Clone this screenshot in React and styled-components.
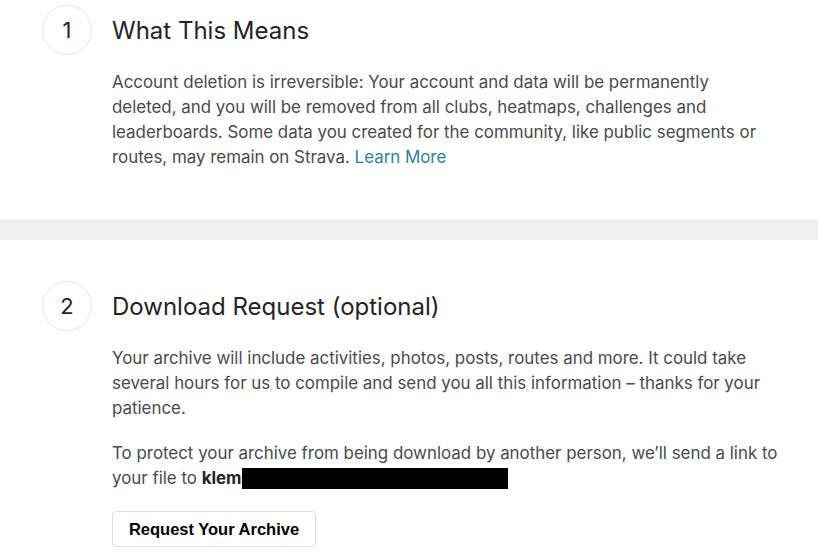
import styled, { createGlobalStyle } from "styled-components";

const Global = createGlobalStyle`
    body {
        margin: 0;
        background: #fff;
        font-family: Inter, "Noto Sans", sans-serif;
    }
`
const Page = styled.div`
    width: 818px;
    display: flex;
    flex-direction: column;
`
const Section = styled.section`
    padding: ${p => p.$top}px 30px ${p => p.$bottom}px 42px;
`
const Header = styled.div`
    display: flex;
    align-items: center;
    gap: 20px;
`
const Step = styled.div`
    width: 48px;
    height: 48px;
    border: 1px solid #e6e6e8;
    border-radius: 50%;
    display: flex;
    align-items: center;
    justify-content: center;
    font-size: 22px;
    color: #242428;
    flex-shrink: 0;
`
const Title = styled.h2`
    margin: 0;
    font-size: 24px;
    font-weight: 400;
    color: #242428;
`
const Body = styled.div`
    margin: 15px 0 0 70px;
    max-width: ${p => p.$width}px;
`
const Text = styled.p`
    margin: 0;
    font-size: 16.9px;
    line-height: 25px;
    color: #494950;
    & + & { margin-top: 20px; }
`
const Link = styled.a`
    color: #2f7f9b;
    text-decoration: none;
`
const Email = styled.b`
    color: #242428;
    font-weight: 700;
`
const Redacted = styled.span`
    display: inline-block;
    width: 266px;
    height: 21px;
    background: #000;
    vertical-align: -5px;
`
const Band = styled.div`
    height: 19px;
    background: #f0f0f5;
    border-top: 1px solid #e9e9ed;
`
const Button = styled.button`
    display: block;
    margin-top: 20px;
    height: 36px;
    width: 204px;
    border: 1px solid #dcdcde;
    border-radius: 4px;
    background: #fff;
    font-family: "Liberation Sans", Arial, sans-serif;
    font-weight: 700;
    font-size: 16.5px;
    color: #000;
`

const App = () => {
    return (
        <Page>
            <Global />
            <Section $top={5} $bottom={50}>
                <Header>
                    <Step>1</Step>
                    <Title>What This Means</Title>
                </Header>
                <Body $width={655}>
                    <Text>
                        Account deletion is irreversible: Your account and data will be permanently deleted, and you will be removed from all clubs, heatmaps, challenges and leaderboards. Some data you created for the community, like public segments or routes, may remain on Strava. <Link href="#">Learn More</Link>
                    </Text>
                </Body>
            </Section>
            <Band />
            <Section $top={41} $bottom={10}>
                <Header>
                    <Step>2</Step>
                    <Title>Download Request (optional)</Title>
                </Header>
                <Body $width={676}>
                    <Text>
                        Your archive will include activities, photos, posts, routes and more. It could take several hours for us to compile and send you all this information – thanks for your patience.
                    </Text>
                    <Text>
                        To protect your archive from being download by another person, we’ll send a link to your file to <Email>klem</Email><Redacted />
                    </Text>
                    <Button>Request Your Archive</Button>
                </Body>
            </Section>
        </Page>
    )
}

export default App;
